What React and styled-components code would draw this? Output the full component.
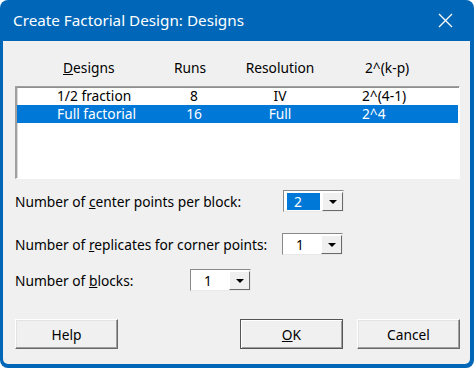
import React from 'react';
import styled, { createGlobalStyle } from 'styled-components';

const Global = createGlobalStyle`
  html, body {
    margin: 0;
    padding: 0;
    background: #ffffff;
  }
  body {
    font-family: "Noto Sans", "Open Sans", sans-serif;
  }
`;

const designs = [
  { name: '1/2 fraction', runs: '8', res: 'IV', exp: '2^(4-1)' },
  { name: 'Full factorial', runs: '16', res: 'Full', exp: '2^4', selected: true },
];

const Window = styled.div`
  width: 474px;
  height: 368px;
  box-sizing: border-box;
  background: #0067b8;
  border-radius: 8px;
  padding: 0 4px 4px 3px;
  display: flex;
  flex-direction: column;
  overflow: hidden;
`;

const TitleBar = styled.div`
  height: 41px;
  flex: 0 0 41px;
  display: flex;
  align-items: center;
  justify-content: space-between;
  padding: 0 17px 0 10px;
  color: #ffffff;
  font-size: 15.25px;
`;

const Title = styled.span`
  margin-top: -1px;
`;

const Body = styled.div`
  flex: 1;
  background: #f0f0f0;
  border-radius: 0 0 5px 5px;
  padding: 0 10px 0 12px;
  display: flex;
  flex-direction: column;
  font-size: 13.75px;
  color: #000;
`;

const Grid = styled.div`
  display: grid;
  grid-template-columns: 133px 88px 84px 1fr;
  align-items: center;
`;

const Header = styled(Grid)`
  margin-top: 17px;
  padding-left: 2px;
  height: 18px;
`;

const HeadCell = styled.span`
  padding-left: ${(p) => p.pad || 0}px;
  padding-right: ${(p) => p.padRight || 0}px;
  text-align: ${(p) => p.align || 'left'};
`;

const ListBox = styled.div`
  margin-top: 10px;
  height: 93px;
  width: 445px;
  box-sizing: border-box;
  background: #ffffff;
  border-style: solid;
  border-width: 1px 1px 1px 2px;
  border-color: #a0a0a0 #ffffff #ffffff #a0a0a0;
  box-shadow: inset 0 1px 0 #909090, inset 1px 1px 0 #d8d8d8;
`;

const Row = styled(Grid)`
  height: 18px;
  background: ${(p) => (p.selected ? '#0078d7' : 'transparent')};
  color: ${(p) => (p.selected ? '#ffffff' : '#000000')};
  margin-right: 1px;
`;

const Cell = styled.span`
  padding-left: ${(p) => p.pad || 0}px;
  text-align: ${(p) => p.align || 'left'};
  line-height: 18px;
`;

const FormRow = styled.div`
  display: flex;
  align-items: center;
  margin-top: ${(p) => p.space}px;
`;

const Label = styled.span`
  width: ${(p) => p.width}px;
  flex: 0 0 auto;
`;

const Combo = styled.div`
  width: 61px;
  height: 22px;
  box-sizing: border-box;
  display: flex;
  border-style: solid;
  border-width: 1px;
  border-color: #8a8a8a #e8e8e8 #e8e8e8 #8a8a8a;
  background: #ffffff;
  padding: 1px 0 0 1px;
`;

const Field = styled.div`
  flex: 1;
  display: flex;
  align-items: center;
  padding: 1px 2px 2px 2px;
`;

const Value = styled.span`
  display: block;
  width: 100%;
  height: 17px;
  line-height: 17px;
  padding-left: ${(p) => (p.selected ? 7 : 10)}px;
  background: ${(p) => (p.selected ? '#0078d7' : 'transparent')};
  color: ${(p) => (p.selected ? '#ffffff' : '#000000')};
  box-sizing: border-box;
`;

const DropButton = styled.div`
  width: 19px;
  display: flex;
  align-items: center;
  justify-content: center;
  background: #f0f0f0;
  border-right: 1px solid #696969;
  border-bottom: 1px solid #696969;
  border-left: 1px solid #ffffff;
  border-top: 1px solid #ffffff;
`;

const Arrow = styled.span`
  width: 0;
  height: 0;
  border-left: 4px solid transparent;
  border-right: 4px solid transparent;
  border-top: 4px solid #000;
`;

const ButtonBar = styled.div`
  display: flex;
  margin-top: 28px;
`;

const Button = styled.button`
  width: 103px;
  height: 30px;
  box-sizing: border-box;
  font-family: inherit;
  font-size: 13.75px;
  color: #000;
  background: #f0f0f0;
  border-style: solid;
  border-width: 1px;
  border-color: ${(p) =>
    p.primary ? '#555555' : '#ffffff #696969 #696969 #ffffff'};
  box-shadow: ${(p) =>
    p.primary
      ? 'inset 1px 1px 0 #ffffff, inset -1px -1px 0 #a0a0a0'
      : 'inset -1px -1px 0 #a0a0a0, inset 1px 1px 0 #e3e3e3'};
  margin-left: ${(p) => p.gap || 0}px;
  padding: 0;
`;

function Dropdown({ value, selected }) {
  return (
    <Combo>
      <Field>
        <Value selected={selected}>{value}</Value>
      </Field>
      <DropButton>
        <Arrow />
      </DropButton>
    </Combo>
  );
}

export default function App() {
  return (
    <>
      <Global />
      <Window>
        <TitleBar>
          <Title>Create Factorial Design: Designs</Title>
          <svg width="15" height="15" viewBox="0 0 15 15">
            <path d="M1 1 L14 14 M14 1 L1 14" stroke="#ffffff" strokeWidth="1.3" />
          </svg>
        </TitleBar>
        <Body>
          <Header>
            <HeadCell pad={46}>
              <u>D</u>esigns
            </HeadCell>
            <HeadCell align="center" padRight={8}>
              Runs
            </HeadCell>
            <HeadCell align="center">Resolution</HeadCell>
            <HeadCell pad={43}>2^(k-p)</HeadCell>
          </Header>
          <ListBox>
            {designs.map((d) => (
              <Row key={d.name} selected={d.selected}>
                <Cell pad={40}>{d.name}</Cell>
                <Cell align="center">{d.runs}</Cell>
                <Cell align="center">{d.res}</Cell>
                <Cell pad={40}>{d.exp}</Cell>
              </Row>
            ))}
          </ListBox>
          <FormRow space={11}>
            <Label width={268}>
              Number of <u>c</u>enter points per block:
            </Label>
            <Dropdown value="2" selected />
          </FormRow>
          <FormRow space={21}>
            <Label width={267}>
              Number of <u>r</u>eplicates for corner points:
            </Label>
            <Dropdown value="1" />
          </FormRow>
          <FormRow space={14}>
            <Label width={175}>
              Number of <u>b</u>locks:
            </Label>
            <Dropdown value="1" />
          </FormRow>
          <ButtonBar>
            <Button>Help</Button>
            <Button primary gap={122}>
              <u>O</u>K
            </Button>
            <Button gap={14}>Cancel</Button>
          </ButtonBar>
        </Body>
      </Window>
    </>
  );
}
